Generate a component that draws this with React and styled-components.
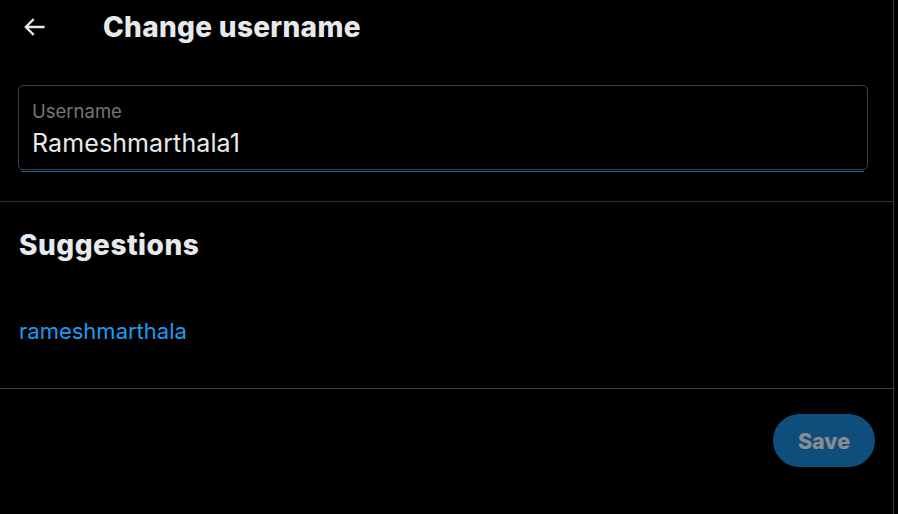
import React from "react";
import styled, { createGlobalStyle } from "styled-components";

const GlobalStyle = createGlobalStyle`
  html, body {
    margin: 0;
    padding: 0;
    background: #000000;
  }
  body {
    font-family: Inter, "Noto Sans", sans-serif;
    color: #e7e9ea;
  }
`;

const Page = styled.div`
  width: 893px;
  height: 514px;
  border-right: 1px solid #3a3d40;
  background: #000000;
  display: flex;
  flex-direction: column;
`;

const Header = styled.header`
  height: 54px;
  display: flex;
  align-items: center;
  padding-left: 19px;
`;

const BackButton = styled.button`
  width: 30px;
  height: 34px;
  display: flex;
  align-items: center;
  justify-content: center;
  background: none;
  border: none;
  padding: 0;
  color: #e7e9ea;
  margin-right: 54px;
`;

const Title = styled.h2`
  margin: 0;
  font-size: 28px;
  font-weight: 800;
  letter-spacing: 0.3px;
  color: #e7e9ea;
`;

const InputSection = styled.div`
  padding: 31px 25px 31px 18px;
  border-bottom: 1px solid #2f3336;
`;

const Field = styled.label`
  display: flex;
  flex-direction: column;
  height: 85px;
  box-sizing: border-box;
  border: 1px solid #3e4144;
  border-radius: 5px;
  padding: 14px 13px 0;
  position: relative;

  &::after {
    content: "";
    position: absolute;
    left: 3px;
    right: 3px;
    bottom: -3px;
    height: 1px;
    background: #1a6aa0;
  }
`;

const FieldLabel = styled.span`
  font-size: 18.5px;
  color: #71767b;
  line-height: 22px;
`;

const FieldValue = styled.span`
  font-size: 25px;
  letter-spacing: 0.1px;
  color: #e7e9ea;
  line-height: 32px;
  margin-top: 5px;
`;

const Suggestions = styled.section`
  padding: 26px 19px 0;
  height: 187px;
  box-sizing: border-box;
  border-bottom: 1px solid #3a3d40;
`;

const SectionTitle = styled.h3`
  margin: 0;
  font-size: 28px;
  font-weight: 800;
  letter-spacing: 0.5px;
  line-height: 34px;
  color: #e7e9ea;
`;

const SuggestionLink = styled.a`
  display: block;
  margin-top: 55px;
  font-size: 22px;
  line-height: 28px;
  color: #1d9bf0;
  text-decoration: none;
`;

const Footer = styled.div`
  display: flex;
  justify-content: flex-end;
  padding: 25px 18px 0;
`;

const SaveButton = styled.button`
  width: 102px;
  height: 53px;
  border-radius: 27px;
  border: none;
  background: #0f4e7b;
  color: #8a8d90;
  font-family: Inter, "Noto Sans", sans-serif;
  font-size: 21.5px;
  font-weight: 800;
`;

function BackArrow() {
  return (
    <svg width="28" height="28" viewBox="0 0 24 24" fill="currentColor">
      <path d="M7.414 13l5.043 5.04-1.414 1.42L3.586 12l7.457-7.46 1.414 1.42L7.414 11H21v2H7.414z" />
    </svg>
  );
}

export default function App() {
  return (
    <>
      <GlobalStyle />
      <Page>
        <Header>
          <BackButton aria-label="Back">
            <BackArrow />
          </BackButton>
          <Title>Change username</Title>
        </Header>
        <InputSection>
          <Field>
            <FieldLabel>Username</FieldLabel>
            <FieldValue>Rameshmarthala1</FieldValue>
          </Field>
        </InputSection>
        <Suggestions>
          <SectionTitle>Suggestions</SectionTitle>
          <SuggestionLink href="#">rameshmarthala</SuggestionLink>
        </Suggestions>
        <Footer>
          <SaveButton disabled>Save</SaveButton>
        </Footer>
      </Page>
    </>
  );
}
